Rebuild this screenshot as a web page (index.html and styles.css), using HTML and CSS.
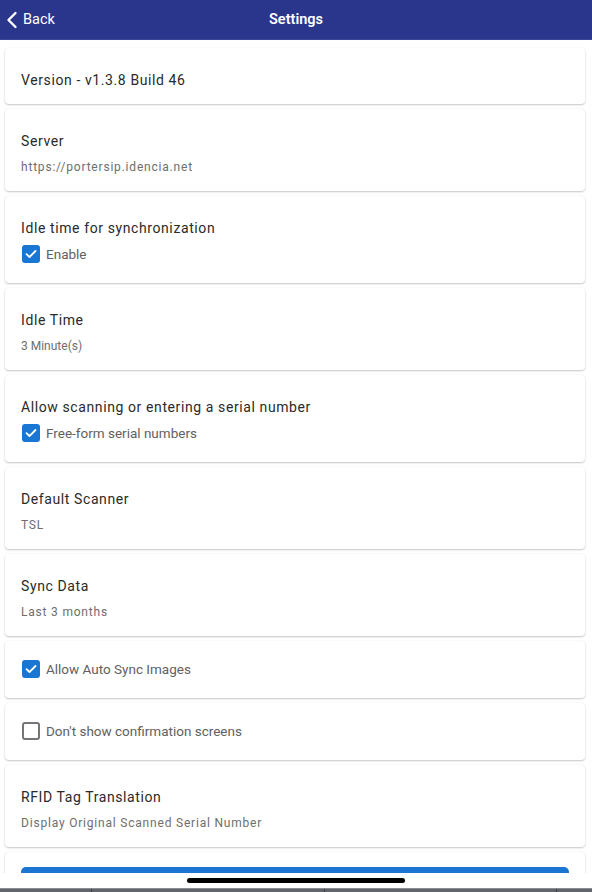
FILE: index.html
```html
<!DOCTYPE html>
<html>
<head>
<meta charset="utf-8">
<link rel="stylesheet" href="styles.css">
</head>
<body>
<div class="screen">
  <header class="topbar">
    <div class="back">
      <svg class="chev" width="12" height="18" viewBox="0 0 12 18"><path d="M9.5 2 L2.5 9 L9.5 16" fill="none" stroke="#fff" stroke-width="2.4" stroke-linecap="round" stroke-linejoin="round"/></svg>
      <span>Back</span>
    </div>
    <div class="title">Settings</div>
  </header>
  <main class="content">
    <section class="card single">
      <div class="card-title">Version - v1.3.8 Build 46</div>
    </section>
    <section class="card">
      <div class="card-title">Server</div>
      <div class="card-sub">https://portersip.idencia.net</div>
    </section>
    <section class="card">
      <div class="card-title">Idle time for synchronization</div>
      <label class="check-row in-card"><span class="box checked"><svg width="12" height="10" viewBox="0 0 12 10"><path d="M1.5 5.2 L4.5 8 L10.5 2" fill="none" stroke="#fff" stroke-width="1.8" stroke-linecap="round" stroke-linejoin="round"/></svg></span><span class="check-label">Enable</span></label>
    </section>
    <section class="card">
      <div class="card-title">Idle Time</div>
      <div class="card-sub plain">3 Minute(s)</div>
    </section>
    <section class="card">
      <div class="card-title">Allow scanning or entering a serial number</div>
      <label class="check-row in-card"><span class="box checked"><svg width="12" height="10" viewBox="0 0 12 10"><path d="M1.5 5.2 L4.5 8 L10.5 2" fill="none" stroke="#fff" stroke-width="1.8" stroke-linecap="round" stroke-linejoin="round"/></svg></span><span class="check-label">Free-form serial numbers</span></label>
    </section>
    <section class="card">
      <div class="card-title">Default Scanner</div>
      <div class="card-sub">TSL</div>
    </section>
    <section class="card">
      <div class="card-title">Sync Data</div>
      <div class="card-sub">Last 3 months</div>
    </section>
    <section class="card check-card">
      <label class="check-row"><span class="box checked"><svg width="12" height="10" viewBox="0 0 12 10"><path d="M1.5 5.2 L4.5 8 L10.5 2" fill="none" stroke="#fff" stroke-width="1.8" stroke-linecap="round" stroke-linejoin="round"/></svg></span><span class="check-label">Allow Auto Sync Images</span></label>
    </section>
    <section class="card check-card">
      <label class="check-row"><span class="box"></span><span class="check-label">Don't show confirmation screens</span></label>
    </section>
    <section class="card">
      <div class="card-title">RFID Tag Translation</div>
      <div class="card-sub">Display Original Scanned Serial Number</div>
    </section>
    <section class="card button-card">
      <div class="primary-btn"></div>
    </section>
  </main>
  <div class="home-area"><div class="home-indicator"></div></div>
  <div class="tabbar">
    <span></span><span></span><span></span><span></span>
  </div>
</div>
</body>
</html>
```
FILE: styles.css
```css
* { box-sizing: border-box; }
html, body { margin: 0; padding: 0; background: #fff; }
body { font-family: Roboto, "Noto Sans", Arial, sans-serif; }
.screen {
  width: 592px;
  height: 892px;
  overflow: hidden;
  display: flex;
  flex-direction: column;
  background: #fff;
}
.topbar {
  height: 40px;
  flex: 0 0 40px;
  background: #29368c;
  color: #fff;
  position: relative;
  display: flex;
  align-items: center;
  border-bottom: 1px solid #3a4796;
}
.back {
  display: flex;
  align-items: center;
  gap: 5px;
  padding-left: 6px;
  font-size: 14.5px;
  color: #fff;
}
.chev { display: block; }
.title {
  position: absolute;
  left: 0; right: 0;
  text-align: center;
  font-size: 14.5px;
  font-weight: 600;
  pointer-events: none;
}
.content {
  flex: 0 0 833px;
  height: 833px;
  overflow: hidden;
  padding: 8px 7px 0 5px;
  display: flex;
  flex-direction: column;
  gap: 5px;
  background: #fff;
}
.card {
  flex: 0 0 auto;
  background: #fff;
  border-radius: 4px;
  box-shadow: 0 1px 2px rgba(0,0,0,0.22), 0 0 2px rgba(0,0,0,0.06);
  padding: 22px 16px 15px;
}
.card.single { padding: 22px 16px 14px; }
.card-title {
  font-size: 14px;
  line-height: 20px;
  color: #2a2a2a;
  letter-spacing: 0.6px;
}
.card-sub {
  margin-top: 7px;
  font-size: 12px;
  line-height: 18px;
  color: #6e6e6e;
  letter-spacing: 0.8px;
}
.card-sub.plain { letter-spacing: 0; }
.check-row {
  display: flex;
  align-items: center;
  gap: 6px;
  height: 24px;
}
.check-row.in-card { margin-top: 4px; margin-bottom: 2px; }
.box {
  width: 18px;
  height: 18px;
  margin-left: 1px;
  border: 2px solid #757575;
  border-radius: 3px;
  display: flex;
  align-items: center;
  justify-content: center;
}
.box.checked { background: #1976d2; border-color: #1976d2; }
.check-label {
  font-size: 13.5px;
  color: #616161;
  letter-spacing: 0;
}
.card.check-card { padding: 16px 16px 17px; }
.button-card { padding: 15px 16px 0; }
.primary-btn {
  height: 36px;
  background: #1a76d2;
  border-radius: 5px;
}
.home-area {
  flex: 0 0 15px;
  display: flex;
  justify-content: center;
  padding-top: 5px;
  background: #fff;
}
.home-indicator {
  width: 218px;
  height: 5px;
  border-radius: 3px;
  background: #000;
}
.tabbar {
  flex: 0 0 4px;
  background: #62656c;
  border-top: 1px solid #8a8d93;
  display: grid;
  grid-template-columns: 92px 233px 232px 35px;
}
.tabbar span { border-right: 1px solid #3d3f44; }
.tabbar span:last-child { border-right: 0; }
```
